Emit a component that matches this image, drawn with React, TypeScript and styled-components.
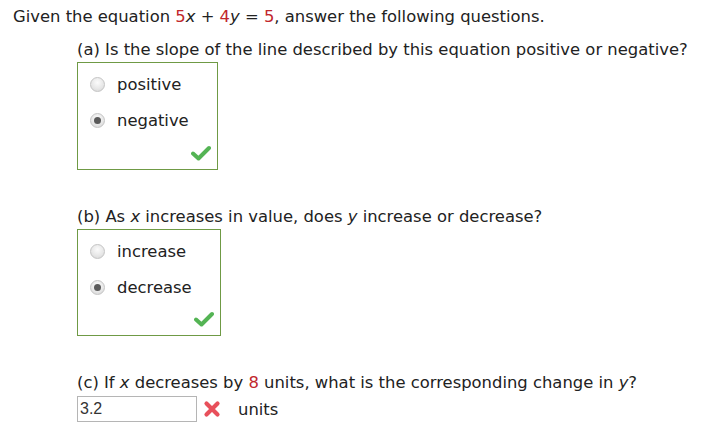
import React from "react";
import styled, { createGlobalStyle } from "styled-components";

const Global = createGlobalStyle`
  html, body { margin: 0; padding: 0; background: #fff; }
  body { font-family: "DejaVu Sans", Verdana, sans-serif; color: #222; }
`;

const Page = styled.div`
  width: 726px;
  height: 438px;
  padding: 7px 0 0 13px;
  box-sizing: border-box;
  font-size: 16.4px;
  line-height: 19px;
`;

const Intro = styled.div`
  margin: 0;
`;

const Questions = styled.div`
  padding-left: 64px;
  display: flex;
  flex-direction: column;
`;

const Prompt = styled.div<{ $top: number }>`
  margin-top: ${(p) => p.$top}px;
`;

const Red = styled.span`
  color: #c1272d;
`;

const Var = styled.i`
  font-style: italic;
`;

const ChoiceBox = styled.div<{ $pr: number; $h: number }>`
  align-self: flex-start;
  margin-top: 3px;
  border: 1px solid #6f9a45;
  padding: 11px ${(p) => p.$pr}px 0 12px;
  height: ${(p) => p.$h}px;
  box-sizing: border-box;
  position: relative;
`;

const Option = styled.label`
  display: flex;
  align-items: center;
  height: 20px;
  margin-bottom: 16px;
  gap: 12px;
`;

const Radio = styled.span<{ $on?: boolean }>`
  width: 15px;
  height: 15px;
  border-radius: 50%;
  box-sizing: border-box;
  border: 1px solid #c4c4c4;
  background: radial-gradient(circle at 50% 35%, #fbfbfb 0%, #e6e6e6 60%, #d2d2d2 100%);
  display: flex;
  align-items: center;
  justify-content: center;
  &::after {
    content: "";
    display: ${(p) => (p.$on ? "block" : "none")};
    width: 7px;
    height: 7px;
    border-radius: 50%;
    background: #5a5a5a;
  }
`;

const Mark = styled.span`
  position: absolute;
  right: 6px;
  bottom: 8px;
  display: flex;
`;

const AnswerRow = styled.div`
  display: flex;
  align-items: center;
  margin-top: 4px;
`;

const Input = styled.div`
  width: 120px;
  height: 26px;
  box-sizing: border-box;
  border: 1px solid #b5b5b5;
  font-family: "Liberation Sans", Arial, sans-serif;
  font-size: 16px;
  line-height: 20px;
  color: #333;
  padding: 2px 0 0 2px;
`;

const Cross = styled.span`
  display: flex;
  margin-left: 6px;
  margin-right: 17px;
`;

const Check = () => (
  <svg width="20" height="16" viewBox="0 0 20 16">
    <path d="M2 8.5 L7.5 13.5 L18 3" fill="none" stroke="#54b454" strokeWidth="4" strokeLinecap="round" strokeLinejoin="round" />
  </svg>
);

const XIcon = () => (
  <svg width="18" height="18" viewBox="0 0 18 18">
    <path d="M3.5 3.5 L14.5 14.5 M14.5 3.5 L3.5 14.5" fill="none" stroke="#e8505b" strokeWidth="4.2" strokeLinecap="round" />
  </svg>
);

const Choices = ({ items, selected, pr, h }: { items: string[]; selected: number; pr: number; h: number }) => (
  <ChoiceBox $pr={pr} $h={h}>
    {items.map((t, i) => (
      <Option key={t}>
        <Radio $on={i === selected} />
        <span>{t}</span>
      </Option>
    ))}
    <Mark>
      <Check />
    </Mark>
  </ChoiceBox>
);

export default function App() {
  return (
    <>
      <Global />
      <Page>
        <Intro>
          Given the equation <Red>5</Red>
          <Var>x</Var> + <Red>4</Red>
          <Var>y</Var> = <Red>5</Red>, answer the following questions.
        </Intro>
        <Questions>
          <Prompt $top={14}>(a) Is the slope of the line described by this equation positive or negative?</Prompt>
          <Choices items={["positive", "negative"]} selected={1} pr={28} h={108} />
          <Prompt $top={37}>
            (b) As <Var>x</Var> increases in value, does <Var>y</Var> increase or decrease?
          </Prompt>
          <Choices items={["increase", "decrease"]} selected={1} pr={28} h={107} />
          <Prompt $top={37}>
            (c) If <Var>x</Var> decreases by <Red>8</Red> units, what is the corresponding change in <Var>y</Var>?
          </Prompt>
          <AnswerRow>
            <Input>3.2</Input>
            <Cross>
              <XIcon />
            </Cross>
            <span>units</span>
          </AnswerRow>
        </Questions>
      </Page>
    </>
  );
}
